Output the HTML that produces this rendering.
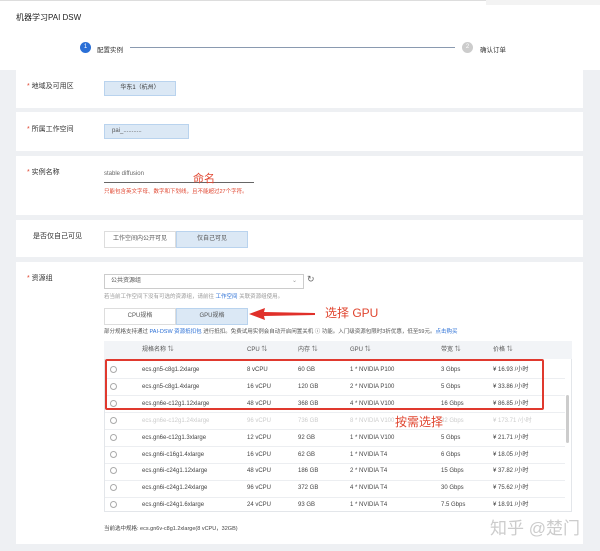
<!DOCTYPE html>
<html><head><meta charset="utf-8"><style>
*{margin:0;padding:0;box-sizing:border-box}
body{width:600px;height:551px;overflow:hidden;background:#eef0f3;font-family:"Liberation Sans","Noto Sans CJK SC",sans-serif;color:#333;position:relative;font-size:6px}
.a{position:absolute;white-space:nowrap}
.card{position:absolute;left:16px;width:567px;background:#fff}
.lbl{font-size:7px;color:#333}
.r{color:#e0452f}
.btn{position:absolute;height:17px;font-size:6px;line-height:15px;text-align:center;color:#555}
.c{line-height:8px;height:8px}
</style></head><body>
<div class="a" style="left:0;top:0;width:600px;height:70px;background:#fff;border-top:1px solid #ddd"></div>
<div class="a" style="left:486px;top:0;width:114px;height:5px;background:#f3f3f3"></div>
<div class="a" style="left:16px;top:12px;font-size:8px;color:#222">机器学习PAI DSW</div>
<div class="a" style="left:80px;top:42px;width:11px;height:11px;border-radius:50%;background:#2a6fd6;color:#fff;font-size:6px;line-height:11px;text-align:center">1</div>
<div class="a" style="left:97px;top:44px;font-size:6.5px">配置实例</div>
<div class="a" style="left:130px;top:47px;width:325px;height:1px;background:#8a9ab0"></div>
<div class="a" style="left:462px;top:42px;width:11px;height:11px;border-radius:50%;background:#ccc;color:#fff;font-size:6px;line-height:11px;text-align:center">2</div>
<div class="a" style="left:480px;top:44px;font-size:6.5px">确认订单</div>

<div class="card" style="top:70px;height:38px"></div>
<div class="a lbl" style="left:27px;top:81px"><span class="r">*</span> 地域及可用区</div>
<div class="a" style="left:104px;top:81px;width:72px;height:15px;background:#dbe8f5;border:1px solid #b9d3ee;font-size:6px;line-height:13px;text-align:center">华东1（杭州）</div>

<div class="card" style="top:112px;height:39px"></div>
<div class="a lbl" style="left:27px;top:124px"><span class="r">*</span> 所属工作空间</div>
<div class="a" style="left:104px;top:124px;width:85px;height:15px;background:#dbe8f5;border:1px solid #b9d3ee;font-size:6px;line-height:13px;padding-left:7px;color:#555">pai_...........</div>

<div class="card" style="top:156px;height:59px"></div>
<div class="a lbl" style="left:27px;top:167px"><span class="r">*</span> 实例名称</div>
<div class="a" style="left:104px;top:171px;font-size:6px;color:#666">stable diffusion</div>
<div class="a" style="left:104px;top:182px;width:150px;height:1px;background:#666"></div>
<div class="a" style="left:193px;top:170px;font-size:11px;color:#e0452f">命名</div>
<div class="a" style="left:104px;top:187px;font-size:5.5px;color:#e0452f">只能包含英文字母、数字和下划线，且不能超过27个字符。</div>

<div class="card" style="top:220px;height:37px"></div>
<div class="a lbl" style="left:33px;top:231px">是否仅自己可见</div>
<div class="btn" style="left:104px;top:231px;width:72px;border:1px solid #ddd;background:#fff">工作空间内公开可见</div>
<div class="btn" style="left:176px;top:231px;width:72px;background:#dbe8f5;border:1px solid #b9d3ee">仅自己可见</div>

<div class="card" style="top:262px;height:282px"></div>
<div class="a lbl" style="left:27px;top:273px"><span class="r">*</span> 资源组</div>
<div class="a" style="left:104px;top:274px;width:200px;height:15px;border:1px solid #ccc;font-size:6px;line-height:13px;padding-left:6px;color:#555">公共资源组<span style="position:absolute;right:6px;color:#999">⌄</span></div>
<div class="a" style="left:307px;top:274px;font-size:9px;color:#666">↻</div>
<div class="a" style="left:104px;top:292px;font-size:5.5px;color:#999">若当前工作空间下没有可选的资源组，请前往 <span style="color:#2a6fd6">工作空间</span> 关联资源组使用。</div>
<div class="btn" style="left:104px;top:308px;width:72px;border:1px solid #ddd;background:#fff">CPU规格</div>
<div class="btn" style="left:176px;top:308px;width:72px;background:#dbe8f5;border:1px solid #b9d3ee">GPU规格</div>
<svg class="a" style="left:248px;top:307px" width="68" height="14"><path d="M1 7 L17 1 L16 5 L67 6 L67 8 L16 9 L17 13 Z" fill="#e0302a"/></svg>
<div class="a" style="left:325px;top:304px;font-size:12px;color:#e0452f">选择 GPU</div>
<div class="a" style="left:104px;top:327px;font-size:5.5px;color:#555">部分规格支持通过 <span style="color:#2a6fd6">PAI-DSW 资源抵扣包</span> 进行抵扣。免费试用实例会自动开启闲置关机 ⓘ 功能。入门级资源包限时3折优惠，低至59元。<span style="color:#2a6fd6">点击购买</span></div>

<div class="a" style="left:104px;top:341px;width:468px;height:171px;border:1px solid #e3e6ea;background:#fff"></div>
<div class="a" style="left:104px;top:341px;width:468px;height:18px;background:#f2f4f7"></div>
<div class="a" style="left:566px;top:395px;width:3px;height:48px;background:#ccc;border-radius:2px"></div>
<div id="rows"></div>
<div class="a" style="left:105px;top:359px;width:439px;height:51px;border:2px solid #e0392e;border-radius:2px"></div>
<div class="a" style="left:395px;top:413px;font-size:12px;color:#e0452f">按需选择</div>
<div class="a" style="left:104px;top:524px;font-size:5.5px;color:#444">当前选中规格: ecs.gn6v-c8g1.2xlarge(8 vCPU，32GB)</div>
<div class="a" style="left:490px;top:514px;font-size:17px;color:#ccc">知乎 @楚门</div>
<script>
var h=[["规格名称 ⇅","CPU ⇅","内存 ⇅","GPU ⇅","带宽 ⇅","价格 ⇅"]];
var d=[["ecs.gn5-c8g1.2xlarge","8 vCPU","60 GB","1 * NVIDIA P100","3 Gbps","¥ 16.93 /小时"],
["ecs.gn5-c8g1.4xlarge","16 vCPU","120 GB","2 * NVIDIA P100","5 Gbps","¥ 33.86 /小时"],
["ecs.gn6e-c12g1.12xlarge","48 vCPU","368 GB","4 * NVIDIA V100","16 Gbps","¥ 86.85 /小时"],
["ecs.gn6e-c12g1.24xlarge","96 vCPU","736 GB","8 * NVIDIA V100","32 Gbps","¥ 173.71 /小时"],
["ecs.gn6e-c12g1.3xlarge","12 vCPU","92 GB","1 * NVIDIA V100","5 Gbps","¥ 21.71 /小时"],
["ecs.gn6i-c16g1.4xlarge","16 vCPU","62 GB","1 * NVIDIA T4","6 Gbps","¥ 18.05 /小时"],
["ecs.gn6i-c24g1.12xlarge","48 vCPU","186 GB","2 * NVIDIA T4","15 Gbps","¥ 37.82 /小时"],
["ecs.gn6i-c24g1.24xlarge","96 vCPU","372 GB","4 * NVIDIA T4","30 Gbps","¥ 75.62 /小时"],
["ecs.gn6i-c24g1.6xlarge","24 vCPU","93 GB","1 * NVIDIA T4","7.5 Gbps","¥ 18.91 /小时"]];
var xs=[142,247,298,350,441,493],o="";
h[0].forEach(function(t,i){o+='<div class="a c" style="left:'+xs[i]+'px;top:346px;color:#555">'+t+'</div>';});
d.forEach(function(r,j){var y=366+j*16.9,c=j==3?'#ccc':'#444';
o+='<div class="a" style="left:110px;top:'+y+'px;width:7px;height:7px;border:1px solid #aaa;border-radius:50%"></div>';
if(j>0)o+='<div class="a" style="left:105px;top:'+(y-4.5)+'px;width:460px;height:1px;background:#eceef1"></div>';
r.forEach(function(t,i){o+='<div class="a c" style="left:'+xs[i]+'px;top:'+y+'px;color:'+c+'">'+t+'</div>';});});
document.getElementById('rows').outerHTML=o;
</script>
</body></html>
